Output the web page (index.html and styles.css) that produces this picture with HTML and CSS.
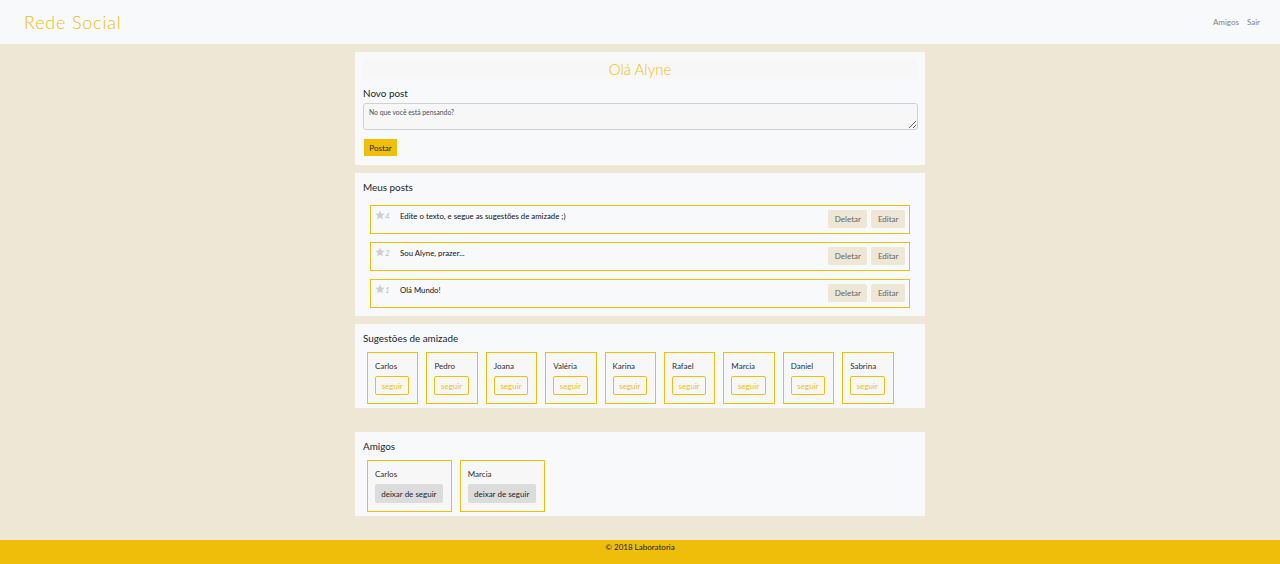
FILE: index.html
```html
<!DOCTYPE html>
<html lang="pt">
<head>
<meta charset="utf-8">
<title>Rede Social</title>
<link rel="stylesheet" href="styles.css">
</head>
<body>
<nav class="navbar">
  <a class="brand" href="#">Rede Social</a>
  <div class="nav-links"><a href="#">Amigos</a><a href="#">Sair</a></div>
</nav>
<main class="main">
  <section class="panel panel-new">
    <h1 class="greeting">Olá Alyne</h1>
    <label class="title title-new">Novo post</label>
    <textarea class="post-input" placeholder="No que você está pensando?"></textarea>
    <button class="btn-post">Postar</button>
  </section>
  <section class="panel panel-posts">
    <h2 class="title title-posts">Meus posts</h2>
    <div class="post-list">
      <article class="post">
        <div class="likes"><svg class="star" viewBox="0 0 24 24"><path d="M12 1l3.400 7.200 7.600 1-5.600 5.400 1.400 7.800-6.800-3.800-6.800 3.800 1.400-7.800L1 9.200l7.600-1z"/></svg><i>4</i></div>
        <p class="post-text">Edite o texto, e segue as sugestões de amizade ;)</p>
        <div class="post-actions"><button class="btn-soft">Deletar</button><button class="btn-soft">Editar</button></div>
      </article>
      <article class="post">
        <div class="likes"><svg class="star" viewBox="0 0 24 24"><path d="M12 1l3.400 7.200 7.600 1-5.600 5.400 1.400 7.800-6.800-3.800-6.800 3.800 1.400-7.800L1 9.200l7.600-1z"/></svg><i>2</i></div>
        <p class="post-text">Sou Alyne, prazer...</p>
        <div class="post-actions"><button class="btn-soft">Deletar</button><button class="btn-soft">Editar</button></div>
      </article>
      <article class="post">
        <div class="likes"><svg class="star" viewBox="0 0 24 24"><path d="M12 1l3.400 7.200 7.600 1-5.600 5.400 1.400 7.800-6.800-3.800-6.800 3.800 1.400-7.800L1 9.200l7.600-1z"/></svg><i>1</i></div>
        <p class="post-text">Olá Mundo!</p>
        <div class="post-actions"><button class="btn-soft">Deletar</button><button class="btn-soft">Editar</button></div>
      </article>
    </div>
  </section>
  <section class="panel panel-people panel-suggest">
    <h2 class="title">Sugestões de amizade</h2>
    <div class="cards">
      <div class="card"><span>Carlos</span><button class="btn-follow">seguir</button></div>
      <div class="card"><span>Pedro</span><button class="btn-follow">seguir</button></div>
      <div class="card"><span>Joana</span><button class="btn-follow">seguir</button></div>
      <div class="card"><span>Valéria</span><button class="btn-follow">seguir</button></div>
      <div class="card"><span>Karina</span><button class="btn-follow">seguir</button></div>
      <div class="card"><span>Rafael</span><button class="btn-follow">seguir</button></div>
      <div class="card"><span>Marcia</span><button class="btn-follow">seguir</button></div>
      <div class="card"><span>Daniel</span><button class="btn-follow">seguir</button></div>
      <div class="card"><span>Sabrina</span><button class="btn-follow">seguir</button></div>
    </div>
  </section>
  <section class="panel panel-people">
    <h2 class="title">Amigos</h2>
    <div class="cards">
      <div class="card"><span>Carlos</span><button class="btn-unfollow">deixar de seguir</button></div>
      <div class="card"><span>Marcia</span><button class="btn-unfollow">deixar de seguir</button></div>
    </div>
  </section>
</main>
<footer class="footer">© 2018 Laboratoria</footer>
</body>
</html>
```
FILE: styles.css
```css
* { box-sizing: border-box; }
html, body { margin: 0; height: 100%; }
body {
  display: flex;
  flex-direction: column;
  min-height: 564px;
  background: #efe7d5;
  color: #212529;
  font-family: Lato, "Open Sans", sans-serif;
  font-size: 8px;
  line-height: 12px;
}
button { font-family: inherit; cursor: pointer; }
.navbar {
  height: 44px;
  flex: none;
  display: flex;
  align-items: center;
  justify-content: space-between;
  padding: 0 20px 0 24px;
  background: #f8f9fa;
}
.brand {
  color: #efbe0c;
  font-size: 18px;
  font-weight: 300;
  letter-spacing: 0.8px;
  text-decoration: none;
}
.nav-links { display: flex; gap: 8px; }
.nav-links a { color: #7f8386; text-decoration: none; }
.main {
  flex: 1;
  width: 570px;
  margin: 0 auto;
  padding-top: 8px;
}
.panel { background: #f8f9fa; padding: 7px 8px 8px; margin-bottom: 8px; }
.greeting {
  height: 20px;
  margin: 0 0 7px;
  background: #f7f7f7;
  color: #efbe0c;
  font-size: 15px;
  line-height: 20px;
  font-weight: 300;
  text-align: center;
}
.title {
  display: block;
  margin: 0;
  font-size: 9.9px;
  font-weight: 400;
  line-height: 14px;
}
.title-new { margin: 0 0 3px; }
.post-input {
  display: block;
  width: 555px;
  height: 27px;
  padding: 3px 5px;
  background: #f7f7f7;
  border: 1px solid #ced0d2;
  border-radius: 3px;
  font: 6.8px/10px Lato, sans-serif;
  outline: none;
}
.post-input::placeholder { color: #495057; opacity: 1; }
.btn-post {
  display: block;
  width: 33px;
  height: 17px;
  margin: 9px 0 1px 1px;
  padding: 0;
  border: 0;
  background: #efc004;
  color: #212529;
  font-size: 8px;
}
.panel-posts { padding-top: 7px; }
.title-posts { margin-bottom: 11px; }
.post-list { display: flex; flex-direction: column; gap: 8px; padding: 0 7px; }
.post {
  display: flex;
  height: 29px;
  padding: 4px;
  border: 1px solid #efc004;
}
.likes {
  display: flex;
  align-items: flex-start;
  width: 25px;
  color: #bdbdbd;
  font-size: 8px;
  flex: none;
}
.star { width: 10px; height: 10px; fill: #cfcfcf; flex: none; }
.post-text { flex: 1; margin: 0; color: #111; font-size: 7.8px; line-height: 12px; }
.post-actions { display: flex; gap: 4px; }
.btn-soft {
  height: 18px;
  padding: 0 6.5px;
  border: 0;
  border-radius: 2px;
  background: #efe7d5;
  color: #5f6365;
  font-size: 8px;
}
.panel-people { height: 84px; padding-top: 7px; }
.panel-suggest { margin-bottom: 24px; }
.cards { display: flex; gap: 8px; padding: 7px 4px 0; }
.card {
  display: flex;
  flex-direction: column;
  align-items: flex-start;
  height: 52px;
  padding: 7px 8px 0 7px;
  border: 1px solid #efc004;
  background: #f7f7f7;
  color: #2b2f33;
  font-size: 8px;
  line-height: 12px;
}
.btn-follow {
  height: 19px;
  margin-top: 4px;
  padding: 0 5.625px;
  border: 1px solid #efc004;
  border-radius: 2px;
  background: transparent;
  color: #efbe0c;
  font-size: 8px;
}
.btn-unfollow {
  height: 19px;
  margin-top: 4px;
  padding: 0 6.25px;
  border: 0;
  border-radius: 2px;
  background: #dcdcdc;
  color: #1d1d1d;
  font-size: 8px;
}
.footer {
  flex: none;
  height: 24px;
  padding-top: 1px;
  background: #eebe0b;
  color: #212121;
  font-size: 8px;
  text-align: center;
}
```
